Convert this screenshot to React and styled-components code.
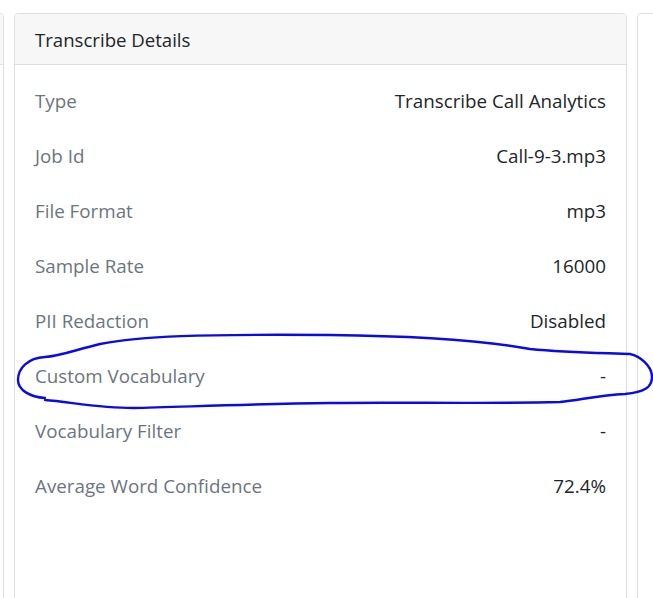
import React from "react";
import styled, { createGlobalStyle } from "styled-components";

const GlobalStyles = createGlobalStyle`
  html, body {
    margin: 0;
    padding: 0;
    background: #fff;
    overflow: hidden;
  }
  body {
    font-family: "Open Sans", "Noto Sans", "Liberation Sans", sans-serif;
    color: #212529;
  }
`;

const Page = styled.div`
  position: relative;
  width: 653px;
  height: 598px;
  overflow: hidden;
`;

const CardRow = styled.div`
  display: grid;
  grid-template-columns: 4px 613px 300px;
  column-gap: 10px;
  padding-top: 13px;
`;

const Slot = styled.div`
  position: relative;
  height: 620px;
`;

const Card = styled.div`
  box-sizing: border-box;
  height: 620px;
  border: 1px solid #dfdfdf;
  border-radius: 4px;
  background: #fff;
  overflow: hidden;
  width: ${(p) => p.$width || "100%"};
  margin-left: ${(p) => p.$shift || "0"};
`;

const CardHeader = styled.div`
  box-sizing: border-box;
  height: 51px;
  padding: 0 20px;
  display: flex;
  align-items: center;
  background: #f7f7f7;
  border-bottom: 1px solid #dfdfdf;
  font-size: 18.6px;
  color: #212529;
`;

const CardBody = styled.div`
  padding: 8px 20px 0 20px;
`;

const DetailRow = styled.div`
  display: flex;
  align-items: center;
  justify-content: space-between;
  height: 55px;
  font-size: 18.8px;
`;

const Label = styled.span`
  color: #6c757d;
`;

const Value = styled.span`
  color: #212529;
`;

const Scribble = styled.svg`
  position: absolute;
  left: 0;
  top: 0;
  pointer-events: none;
`;

const details = [
  ["Type", "Transcribe Call Analytics"],
  ["Job Id", "Call-9-3.mp3"],
  ["File Format", "mp3"],
  ["Sample Rate", "16000"],
  ["PII Redaction", "Disabled"],
  ["Custom Vocabulary", "-"],
  ["Vocabulary Filter", "-"],
  ["Average Word Confidence", "72.4%"],
];

export default function App() {
  return (
    <Page>
      <GlobalStyles />
      <CardRow>
        <Slot>
          <Card $width="300px" $shift="-296px">
            <CardHeader />
          </Card>
        </Slot>
        <Card>
          <CardHeader>Transcribe Details</CardHeader>
          <CardBody>
            {details.map(([k, v]) => (
              <DetailRow key={k}>
                <Label>{k}</Label>
                <Value>{v}</Value>
              </DetailRow>
            ))}
          </CardBody>
        </Card>
        <Card />
      </CardRow>
      <Scribble width="653" height="598" viewBox="0 0 653 598">
        <path
          d="M45,398 C30,397 18,390 18,380 C18,368 28,358 45,357 C60,356 75,350 100,344 C140,336 200,334 330,335 C420,336 480,340 530,349 C570,353 610,353 630,354 C640,356 652,366 652,377 C652,387 645,392 625,394 C600,395 580,400 560,402 C480,404 400,402 330,403 C250,404 180,407 133,408 C100,408 70,402 45,400"
          fill="none"
          stroke="#0a0ae6"
          strokeWidth="2.4"
          strokeLinecap="round"
          strokeLinejoin="round"
        />
      </Scribble>
    </Page>
  );
}
